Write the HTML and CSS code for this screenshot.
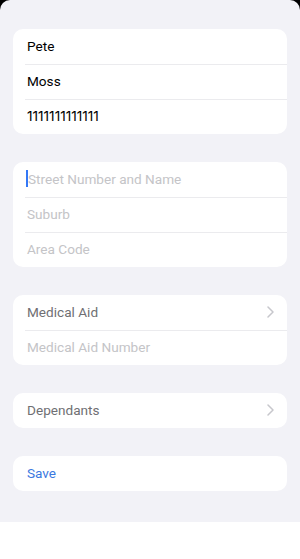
FILE: index.html
```html
<!DOCTYPE html>
<html>
    <head>
        <meta charset="UTF-8">
        <link rel="stylesheet" href="styles.css">
    </head>
    <body>
        <div class="frame">
            <div class="sheet">
                <div class="card">
                    <div class="row"><span class="value">Pete</span></div>
                    <div class="row"><span class="value">Moss</span></div>
                    <div class="row"><span class="value number">1111111111111</span></div>
                </div>
                <div class="card">
                    <div class="row"><span class="caret"></span><span class="placeholder">Street Number and Name</span></div>
                    <div class="row"><span class="placeholder">Suburb</span></div>
                    <div class="row"><span class="placeholder">Area Code</span></div>
                </div>
                <div class="card">
                    <div class="row link"><span class="label">Medical Aid</span>
                        <svg class="chevron" width="7" height="12" viewBox="0 0 7 12"><path d="M1 1l5 5-5 5" fill="none" stroke="#c7c7cc" stroke-width="1.5" stroke-linecap="round" stroke-linejoin="round"/></svg>
                    </div>
                    <div class="row"><span class="placeholder">Medical Aid Number</span></div>
                </div>
                <div class="card">
                    <div class="row link"><span class="label">Dependants</span>
                        <svg class="chevron" width="7" height="12" viewBox="0 0 7 12"><path d="M1 1l5 5-5 5" fill="none" stroke="#c7c7cc" stroke-width="1.5" stroke-linecap="round" stroke-linejoin="round"/></svg>
                    </div>
                </div>
                <div class="card">
                    <div class="row"><span class="save">Save</span></div>
                </div>
            </div>
        </div>
        <div class="bottom"></div>
    </body>
</html>
```

FILE: styles.css
```css
html, body {
    margin: 0;
    padding: 0;
    background: #fff;
    font-family: Roboto, "Noto Sans", sans-serif;
    font-size: 13.6px;
}
.frame {
    background: #000;
}
.sheet {
    background: #f2f2f7;
    border-radius: 10px 10px 0 0;
    height: 522px;
    box-sizing: border-box;
    padding: 29px 13px 0 13px;
    display: flex;
    flex-direction: column;
    gap: 28px;
}
.card {
    background: #fff;
    border-radius: 10px;
    overflow: hidden;
}
.row {
    height: 35px;
    box-sizing: border-box;
    display: flex;
    align-items: center;
    padding: 0 14px 2px 14px;
    position: relative;
}
.row + .row::before {
    content: "";
    position: absolute;
    top: 0;
    left: 12px;
    right: 0;
    height: 1px;
    background: #ebebee;
}
.value {
    color: #000;
}
.number {
    font-family: Inter, Roboto, sans-serif;
    font-size: 13.6px;
}
.placeholder {
    color: #c4c4c7;
}
.label {
    color: #6f6f73;
}
.link {
    justify-content: space-between;
    padding-right: 13px;
}
.caret {
    width: 2px;
    height: 17px;
    background: #3478f6;
    margin-left: -1px;
}
.save {
    color: #3a78e0;
}
.bottom {
    height: 37px;
    background: #fff;
}
```
